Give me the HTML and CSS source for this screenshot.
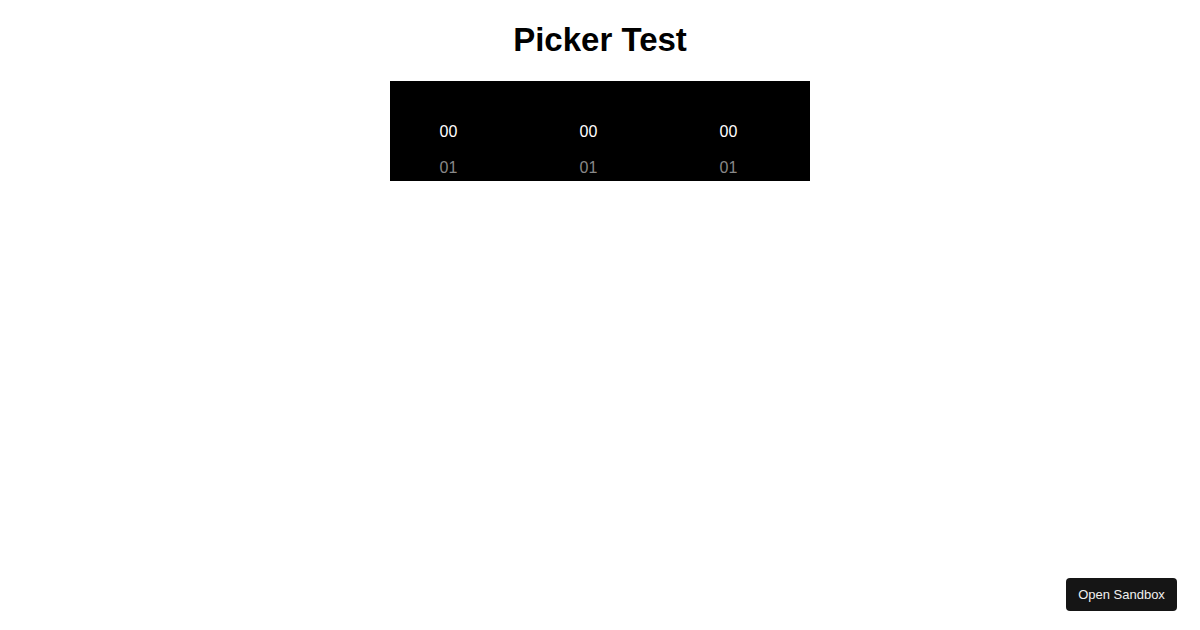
FILE: index.html
```html
<!DOCTYPE html>
<html>
<head>
<meta charset="utf-8">
<link rel="stylesheet" href="styles.css">
</head>
<body>
<h1 class="title">Picker Test</h1>
<div class="picker">
  <div class="col"><div class="item sel">00</div><div class="item">01</div></div>
  <div class="col"><div class="item sel">00</div><div class="item">01</div></div>
  <div class="col"><div class="item sel">00</div><div class="item">01</div></div>
</div>
<button class="sandbox">Open Sandbox</button>
</body>
</html>
```
FILE: styles.css
```css
body {
  margin: 0;
  padding: 0;
  font-family: "Liberation Sans", Arial, sans-serif;
  background: #fff;
}
.title {
  text-align: center;
  font-size: 33px;
  margin: 0;
  padding: 21px 0 23px;
  line-height: 37px;
}
.picker {
  width: 420px;
  height: 100px;
  margin: 0 auto;
  background: #000;
  display: flex;
  overflow: hidden;
}
.col {
  flex: 1;
  padding: 33px 23px 0 0;
}
.item {
  height: 36px;
  line-height: 36px;
  text-align: center;
  font-size: 16px;
  color: #888;
}
.item.sel {
  color: #fff;
}
.sandbox {
  position: fixed;
  right: 23px;
  bottom: 19px;
  width: 111px;
  height: 33px;
  background: #151515;
  color: #f0f0f0;
  border: none;
  border-radius: 4px;
  font-family: "Liberation Sans", Arial, sans-serif;
  font-size: 13px;
  padding: 0;
}
```
